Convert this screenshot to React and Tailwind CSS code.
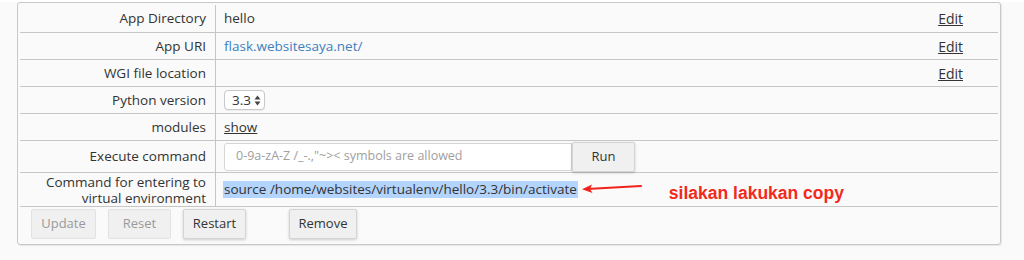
import React from "react";

const ROWS = [
  { label: "App Directory", h: "h-[28px]", value: <span>hello</span>, edit: true },
  {
    label: "App URI",
    h: "h-[27px]",
    value: <a className="text-[#3d7fc1]">flask.websitesaya.net/</a>,
    edit: true,
  },
  { label: "WGI file location", h: "h-[27px]", value: null, edit: true },
  {
    label: "Python version",
    h: "h-[27px]",
    value: (
      <span className="inline-flex items-center h-[20px] pl-[7px] pr-[3px] border border-[#c8c8c8] rounded-[4px] bg-white shadow-[0_1px_1px_rgba(0,0,0,0.06)]">
        3.3
        <svg width="7" height="11" viewBox="0 0 7 11" className="ml-[3px]">
          <path d="M3.5 0.5 L6.5 4.5 H0.5 Z" fill="#444" />
          <path d="M3.5 10.5 L6.5 6.5 H0.5 Z" fill="#444" />
        </svg>
      </span>
    ),
  },
  { label: "modules", h: "h-[27px]", value: <span className="underline">show</span> },
];

export default function App() {
  return (
    <div className="w-[1024px] h-[260px] bg-[#fafafa] font-['Open_Sans',sans-serif] text-[13.5px] text-[#333] relative">
      <div className="ml-[17px] mt-[2px] w-[984px] h-[243px] border border-[#c8c8c8] rounded-[3px] shadow-[1px_1px_1px_rgba(0,0,0,0.08)] px-[2px] pt-[2px]">
        {ROWS.map((r) => (
          <div key={r.label} className={`flex ${r.h} border-b border-[#c6c6c6]`}>
            <div className="w-[196px] border-r border-[#c6c6c6] flex items-center justify-end pr-[9px]">
              {r.label}
            </div>
            <div className="flex-1 flex items-center pl-[8px] pr-[35px]">
              {r.value}
              {r.edit && <span className="ml-auto underline text-[14px]">Edit</span>}
            </div>
          </div>
        ))}

        <div className="flex h-[32px] border-b border-[#c6c6c6]">
          <div className="w-[196px] border-r border-[#c6c6c6] flex items-center justify-end pr-[9px]">
            Execute command
          </div>
          <div className="flex-1 flex items-center pl-[8px]">
            <div className="w-[348px] h-[28px] bg-white border border-[#d6d6d6] rounded-l-[3px] flex items-center pl-[11px] text-[#a0a0a0] text-[12.5px]">
              0-9a-zA-Z /_-.,"~&gt;&lt; symbols are allowed
            </div>
            <div className="w-[63px] h-[30px] bg-[#f0f0f0] border border-[#d4d4d4] rounded-[2px] shadow-[0_1px_3px_rgba(0,0,0,0.18)] flex items-center justify-center text-[13px]">
              Run
            </div>
          </div>
        </div>

        <div className="flex h-[34px] border-b border-[#c6c6c6]">
          <div className="w-[196px] border-r border-[#c6c6c6] flex flex-col items-end justify-center pr-[9px] leading-[16px] text-right">
            <span>Command for entering to</span>
            <span>virtual environment</span>
          </div>
          <div className="flex-1 flex items-center pl-[7px]">
            <span className="bg-[#b3d4fc] px-[1px] leading-[17px]">
              source /home/websites/virtualenv/hello/3.3/bin/activate
            </span>
            <svg width="62" height="12" viewBox="0 0 62 12" className="ml-[3px] mt-[-3px]">
              <path d="M6 7 L60 4" stroke="#f0221a" strokeWidth="2" strokeLinecap="round" fill="none" />
              <path d="M1 7.3 L11 2.5 L9 7 L11.5 11 Z" fill="#f0221a" />
            </svg>
            <span className="ml-[26px] mt-[7px] font-['Liberation_Sans',Arial,sans-serif] font-bold text-[17.5px] leading-[20px] text-[#f2291b]">
              silakan lakukan copy
            </span>
          </div>
        </div>

        <div className="flex items-center h-[34px] pl-[11px] gap-[12px] text-[13px]">
          <div className="w-[65px] h-[30px] bg-[#f0f0f0] border border-[#e2e2e2] rounded-[2px] flex items-center justify-center text-[#9a9a9a]">
            Update
          </div>
          <div className="w-[63px] h-[30px] bg-[#f0f0f0] border border-[#e2e2e2] rounded-[2px] flex items-center justify-center text-[#9a9a9a]">
            Reset
          </div>
          <div className="w-[63px] h-[30px] bg-[#f0f0f0] border border-[#d4d4d4] rounded-[2px] shadow-[0_1px_3px_rgba(0,0,0,0.18)] flex items-center justify-center">
            Restart
          </div>
          <div className="ml-[31px] w-[68px] h-[30px] bg-[#f0f0f0] border border-[#d4d4d4] rounded-[2px] shadow-[0_1px_3px_rgba(0,0,0,0.18)] flex items-center justify-center">
            Remove
          </div>
        </div>
      </div>
      <div className="absolute left-0 right-0 bottom-0 h-[2px] bg-[#4a4a4a]" />
    </div>
  );
}
